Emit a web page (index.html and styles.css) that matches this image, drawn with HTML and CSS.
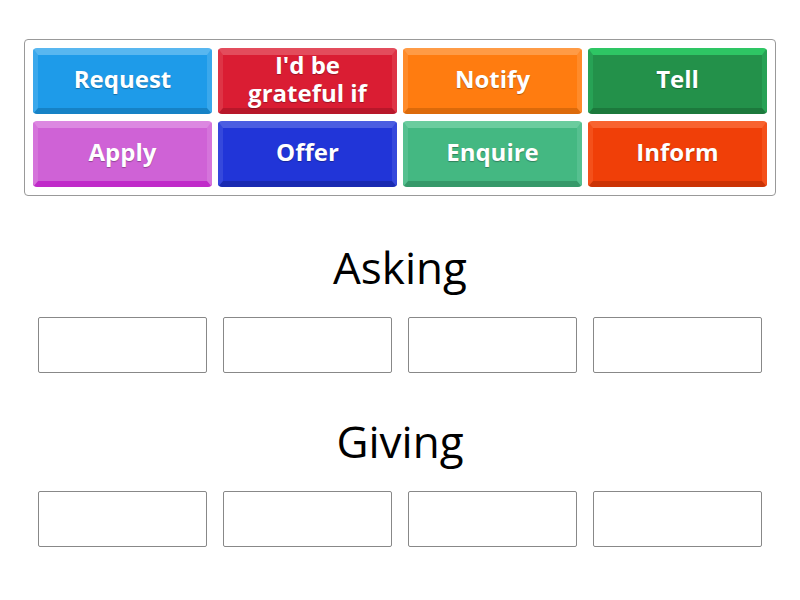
FILE: index.html
```html
<!DOCTYPE html>
<html lang="en">
<head>
<meta charset="UTF-8">
<title>Group sort</title>
<link rel="stylesheet" href="styles.css">
</head>
<body>
<div class="page">
    <div class="tiles">
        <div class="tile blue">Request</div>
        <div class="tile red">I'd be<br>grateful if</div>
        <div class="tile orange">Notify</div>
        <div class="tile green">Tell</div>
        <div class="tile purple">Apply</div>
        <div class="tile navy">Offer</div>
        <div class="tile mint">Enquire</div>
        <div class="tile vermilion">Inform</div>
    </div>

    <div class="group">
        <h2>Asking</h2>
        <div class="slots">
            <div class="slot"></div>
            <div class="slot"></div>
            <div class="slot"></div>
            <div class="slot"></div>
        </div>
    </div>

    <div class="group">
        <h2>Giving</h2>
        <div class="slots">
            <div class="slot"></div>
            <div class="slot"></div>
            <div class="slot"></div>
            <div class="slot"></div>
        </div>
    </div>
</div>
</body>
</html>
```

FILE: styles.css
```css
body {
    margin: 0;
    font-family: "Open Sans", "Liberation Sans", sans-serif;
    background-color: #fff;
    color: #000;
}
.page {
    padding: 39px 24px 0 24px;
}
.tiles {
    display: grid;
    grid-template-columns: repeat(4, 1fr);
    gap: 7px 6px;
    padding: 8px;
    border: 1px solid #999;
    border-radius: 4px;
}
.tile {
    height: 66px;
    box-sizing: border-box;
    padding-bottom: 5px;
    display: flex;
    align-items: center;
    justify-content: center;
    text-align: center;
    border-style: solid;
    border-width: 7px 5px 6px 5px;
    border-radius: 4px;
    color: #fff;
    font-size: 24px;
    font-weight: bold;
    line-height: 28px;
    text-shadow: 0 1px 1px rgba(0, 0, 0, 0.3);
}
.blue {
    background-color: #1e9be9;
    border-color: #58b7f0 #3aa8ec #1682c6 #3aa8ec;
}
.red {
    background-color: #da1d33;
    border-color: #e34c5c #de3446 #b8172a #de3446;
}
.orange {
    background-color: #ff7c10;
    border-color: #ff9b46 #ff8b2a #dc6a0a #ff8b2a;
}
.green {
    background-color: #23914a;
    border-color: #2ec664 #27a255 #1c793c #27a255;
}
.purple {
    background-color: #cf62d6;
    border-color: #dc88e1 #d574db #c02ac9 #d574db;
}
.navy {
    background-color: #2135d8;
    border-color: #4b5de1 #3548dc #1a2bb2 #3548dc;
}
.mint {
    background-color: #44b882;
    border-color: #6bcc9e #56c090 #36996a #56c090;
}
.vermilion {
    background-color: #f03f08;
    border-color: #f8632f #f4501a #cb3305 #f4501a;
}
.group {
    margin-top: 41px;
}
.group + .group {
    margin-top: 38px;
}
.group h2 {
    margin: 0 0 20px 0;
    font-size: 44px;
    font-weight: normal;
    line-height: 60px;
    text-align: center;
}
.slots {
    display: flex;
    gap: 16px;
    padding: 0 14px;
}
.slot {
    flex: 1;
    height: 56px;
    box-sizing: border-box;
    border: 1px solid #888;
    border-radius: 2px;
}
```
